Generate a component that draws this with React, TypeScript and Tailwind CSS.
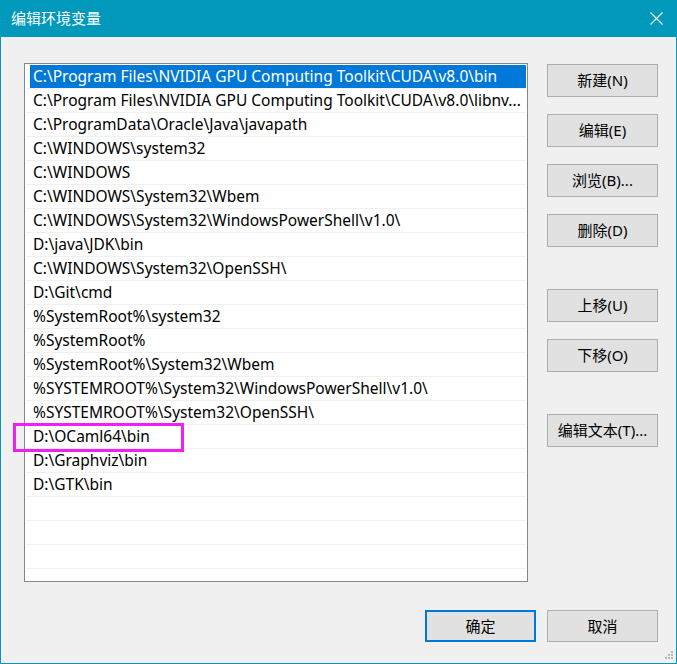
import * as React from 'react';

const paths = [
  'C:\\Program Files\\NVIDIA GPU Computing Toolkit\\CUDA\\v8.0\\bin',
  'C:\\Program Files\\NVIDIA GPU Computing Toolkit\\CUDA\\v8.0\\libnv...',
  'C:\\ProgramData\\Oracle\\Java\\javapath',
  'C:\\WINDOWS\\system32',
  'C:\\WINDOWS',
  'C:\\WINDOWS\\System32\\Wbem',
  'C:\\WINDOWS\\System32\\WindowsPowerShell\\v1.0\\',
  'D:\\java\\JDK\\bin',
  'C:\\WINDOWS\\System32\\OpenSSH\\',
  'D:\\Git\\cmd',
  '%SystemRoot%\\system32',
  '%SystemRoot%',
  '%SystemRoot%\\System32\\Wbem',
  '%SYSTEMROOT%\\System32\\WindowsPowerShell\\v1.0\\',
  '%SYSTEMROOT%\\System32\\OpenSSH\\',
  'D:\\OCaml64\\bin',
  'D:\\Graphviz\\bin',
  'D:\\GTK\\bin',
  '',
  '',
  '',
];

const WinButton = ({ label, className = '' }: { label: string; className?: string }) => (
  <button
    className={`flex h-[33px] w-[111px] items-center justify-center border border-[#adadad] bg-[#e1e1e1] text-[15px] text-black ${className}`}
  >
    {label}
  </button>
);

export default function App() {
  return (
    <div
      className="relative flex h-[664px] w-[677px] flex-col border border-t-0 border-[#0099bc] bg-[#f0f0f0] text-black"
      style={{ fontFamily: '"Noto Sans", "Noto Sans CJK SC", sans-serif' }}
    >
      {/* Title bar */}
      <div className="-mx-px flex h-[37px] shrink-0 items-center justify-between bg-[#0099bc] pl-[11px] pr-[14px] text-white">
        <span className="text-[15px]">编辑环境变量</span>
        <svg width="13" height="13" viewBox="0 0 13 13" className="mb-px">
          <path d="M0.5 0.5 L12.5 12.5 M12.5 0.5 L0.5 12.5" stroke="white" strokeWidth="1.1" />
        </svg>
      </div>

      {/* Body */}
      <div className="flex pl-[23px] pt-[26px]">
        {/* Path list */}
        <div className="h-[519px] w-[504px] overflow-hidden border border-[#828790] bg-white px-px pt-px">
          {paths.map((p, i) => (
            <div key={i} className="flex h-[24px] border-b border-[#f0f0f0]">
              <div
                className={`ml-[4px] flex h-[23px] flex-1 items-center whitespace-nowrap pl-[3px] pt-px text-[15.5px] ${
                  i === 0 ? 'bg-[#0078d7] text-white' : ''
                }`}
              >
                {p}
              </div>
            </div>
          ))}
        </div>

        {/* Side buttons */}
        <div className="ml-[19px] flex flex-col pt-px">
          <WinButton label="新建(N)" />
          <WinButton label="编辑(E)" className="mt-[17px]" />
          <WinButton label="浏览(B)..." className="mt-[17px]" />
          <WinButton label="删除(D)" className="mt-[17px]" />
          <WinButton label="上移(U)" className="mt-[42px]" />
          <WinButton label="下移(O)" className="mt-[17px]" />
          <WinButton label="编辑文本(T)..." className="mt-[42px]" />
        </div>
      </div>

      {/* Bottom buttons */}
      <div className="mt-[28px] flex justify-end gap-[11px] pr-[18px]">
        <button className="flex h-[32px] w-[111px] items-center justify-center border-2 border-[#0078d7] bg-[#e1e1e1] text-[15px]">
          确定
        </button>
        <button className="flex h-[32px] w-[111px] items-center justify-center border border-[#adadad] bg-[#e1e1e1] text-[15px]">
          取消
        </button>
      </div>

      {/* Highlight annotation */}
      <div className="pointer-events-none absolute left-[12px] top-[423px] h-[29px] w-[171px] border-[3px] border-[#f020f0]" />

      {/* Resize grip */}
      <svg width="10" height="10" viewBox="0 0 10 10" className="absolute bottom-[2px] right-[2px]">
        <g fill="#b8b8b8">
          <rect x="7" y="0" width="2" height="2" />
          <rect x="4" y="3" width="2" height="2" />
          <rect x="7" y="3" width="2" height="2" />
          <rect x="1" y="6" width="2" height="2" />
          <rect x="4" y="6" width="2" height="2" />
          <rect x="7" y="6" width="2" height="2" />
        </g>
      </svg>
    </div>
  );
}
